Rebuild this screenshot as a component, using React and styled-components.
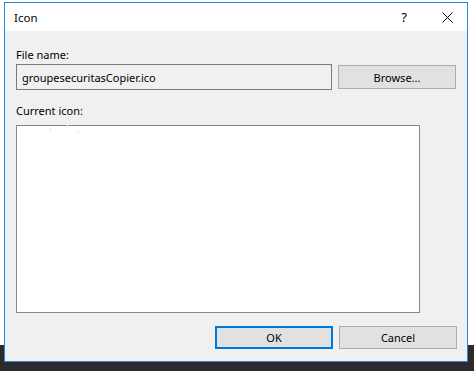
import React from "react";
import styled, { createGlobalStyle } from "styled-components";

const GlobalStyle = createGlobalStyle`
  html, body {
    margin: 0;
    padding: 0;
    background: #ffffff;
  }
  body {
    font-family: "Noto Sans", "Open Sans", sans-serif;
    font-size: 11px;
    color: #000;
  }
`;

const Desktop = styled.div`
  width: 474px;
  height: 371px;
  box-sizing: border-box;
  padding: 2px 6px 0 4px;
  background: linear-gradient(to bottom, #ffffff 345px, #2b2b2d 345px);
  overflow: hidden;
`;

const Window = styled.div`
  width: 464px;
  height: 360px;
  box-sizing: border-box;
  border: 1px solid #2b88d8;
  background: #f0f0f0;
  display: flex;
  flex-direction: column;
`;

const TitleBar = styled.div`
  height: 28px;
  background: #ffffff;
  display: flex;
  align-items: center;
  padding-left: 9px;
`;

const Title = styled.div`
  flex: 1;
  font-size: 11.5px;
`;

const TitleButton = styled.div`
  width: ${(p) => p.$w}px;
  height: 28px;
  display: flex;
  align-items: center;
  justify-content: center;
  font-size: 13px;
`;

const Body = styled.div`
  flex: 1;
  display: flex;
  flex-direction: column;
  padding: 0 10px 12px 11px;
`;

const Label = styled.div`
  line-height: 16px;
  margin-top: ${(p) => p.$top}px;
  margin-bottom: ${(p) => p.$bottom}px;
`;

const Row = styled.div`
  display: flex;
  align-items: center;
  gap: 6px;
`;

const TextBox = styled.div`
  width: 316px;
  height: 26px;
  box-sizing: border-box;
  border: 1px solid #7a7a7a;
  background: #f0f0f0;
  padding-left: 5px;
  display: flex;
  align-items: center;
`;

const Button = styled.button`
  width: 118px;
  height: ${(p) => p.$h || 23}px;
  box-sizing: border-box;
  margin: 0;
  padding: 0;
  font: inherit;
  color: #000;
  background: #e1e1e1;
  border: 1px solid ${(p) => (p.$default ? "#0078d7" : "#adadad")};
  box-shadow: ${(p) => (p.$default ? "inset 0 0 0 1px #0078d7" : "none")};
  display: flex;
  align-items: center;
  justify-content: center;
`;

const IconList = styled.div`
  position: relative;
  width: 404px;
  height: 188px;
  box-sizing: border-box;
  border: 1px solid #828790;
  background: #ffffff;
`;

const Speck = styled.span`
  position: absolute;
  top: ${(p) => p.$y}px;
  left: ${(p) => p.$x}px;
  width: 1px;
  height: ${(p) => p.$h}px;
  background: ${(p) => p.$c};
`;

const Footer = styled.div`
  margin-top: auto;
  display: flex;
  justify-content: flex-end;
  gap: 6px;
`;

function CloseIcon() {
  return (
    <svg width="11" height="11" viewBox="0 0 11 11">
      <path d="M0.5 0.5 L10.5 10.5 M10.5 0.5 L0.5 10.5" stroke="#000" strokeWidth="1" fill="none" />
    </svg>
  );
}

export default function App() {
  return (
    <>
      <GlobalStyle />
      <Desktop>
        <Window>
          <TitleBar>
            <Title>Icon</Title>
            <TitleButton $w={46}>?</TitleButton>
            <TitleButton $w={40}>
              <CloseIcon />
            </TitleButton>
          </TitleBar>
          <Body>
            <Label $top={16} $bottom={1}>File name:</Label>
            <Row>
              <TextBox>groupesecuritasCopier.ico</TextBox>
              <Button type="button" $h={24}>Browse...</Button>
            </Row>
            <Label $top={13} $bottom={6}>Current icon:</Label>
            <IconList>
              <Speck $x={50} $y={-1} $h={4} $c="#ffffff" />
              <Speck $x={33} $y={3} $h={2} $c="#dcdcdc" />
              <Speck $x={61} $y={5} $h={2} $c="#dcdcdc" />
            </IconList>
            <Footer>
              <Button type="button" $default>OK</Button>
              <Button type="button">Cancel</Button>
            </Footer>
          </Body>
        </Window>
      </Desktop>
    </>
  );
}
